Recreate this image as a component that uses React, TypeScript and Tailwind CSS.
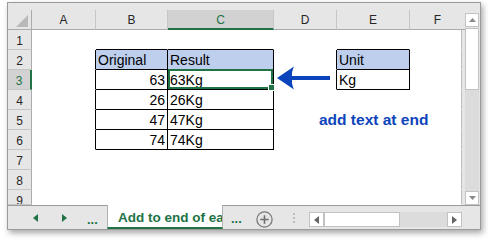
import React from 'react';

type Cell = { t?: string; right?: boolean; blue?: boolean; bb?: boolean; br?: boolean; sel?: boolean; arrow?: boolean; note?: boolean };

const COLS = [
  { k: 'A', w: 'w-[64px]' },
  { k: 'B', w: 'w-[72px]' },
  { k: 'C', w: 'w-[106px]' },
  { k: 'D', w: 'w-[63px]' },
  { k: 'E', w: 'w-[73px]' },
  { k: 'F', w: 'w-[52px]' },
];

const HEAD_W: Record<string, string> = {
  A: 'w-[64px]',
  B: 'w-[72px]',
  C: 'w-[106px]',
  D: 'w-[63px]',
  E: 'w-[73px]',
  F: 'w-[55px]',
};

const DATA: Record<string, Cell> = {
  B1: { bb: true },
  C1: { bb: true },
  E1: { bb: true },
  A2: { br: true },
  A3: { br: true },
  A4: { br: true },
  A5: { br: true },
  A6: { br: true },
  B2: { t: 'Original', blue: true, bb: true, br: true },
  C2: { t: 'Result', blue: true, bb: true, br: true },
  D2: { br: true },
  E2: { t: 'Unit', blue: true, bb: true, br: true },
  B3: { t: '63', right: true, bb: true, br: true },
  C3: { t: '63Kg', bb: true, br: true, sel: true },
  D3: { br: true, arrow: true },
  E3: { t: 'Kg', bb: true, br: true },
  B4: { t: '26', right: true, bb: true, br: true },
  C4: { t: '26Kg', bb: true, br: true },
  B5: { t: '47', right: true, bb: true, br: true },
  C5: { t: '47Kg', bb: true, br: true },
  D5: { note: true },
  B6: { t: '74', right: true, bb: true, br: true },
  C6: { t: '74Kg', bb: true, br: true },
};

function Arrow() {
  return (
    <svg className="absolute left-[2px] -top-[6px] z-10 overflow-visible" width="56" height="30" viewBox="0 0 56 30">
      <path
        d="M1 14 L18 2.5 Q15.5 8 16 12 L54 12 L54 16 L16 16 Q15.5 20 18 25.5 Z"
        fill="#0c44bc"
      />
    </svg>
  );
}

function DataCell({ col, row, w }: { col: string; row: number; w: string }) {
  const c = DATA[col + row] || {};
  const isF = col === 'F';
  return (
    <div
      className={`relative h-full shrink-0 border-r border-b ${w} ${
        isF ? 'border-r-[#bdbdbd]' : c.br ? 'border-r-black' : 'border-r-transparent'
      } ${c.bb ? 'border-b-black' : 'border-b-transparent'} ${c.blue ? 'bg-[#bdcfed]' : 'bg-white'}`}
    >
      {c.t && (
        <span
          className={`block px-[2px] pt-px text-[14px] leading-[19px] text-black whitespace-nowrap ${
            c.right ? 'text-right' : 'text-left'
          }`}
        >
          {c.t}
        </span>
      )}
      {c.note && (
        <span className="relative z-10 block pl-[45px] pt-[2px] text-[15.5px] leading-[16px] font-bold text-[#0c44bc] whitespace-nowrap">
          add text at end
        </span>
      )}
      {c.arrow && <Arrow />}
      {c.sel && (
        <div className="absolute -top-px left-0 right-0 bottom-0 z-20 border-2 border-[#217346]">
          <div className="absolute -right-[4px] -bottom-[4px] w-[7px] h-[7px] bg-[#217346] border border-white" />
        </div>
      )}
    </div>
  );
}

function Row({ n, h }: { n: number; h: string }) {
  const sel = n === 3;
  return (
    <div className={`flex ${h}`}>
      <div
        className={`w-[24px] h-full shrink-0 border-b border-b-[#c6c6c6] text-center text-[12px] leading-[18px] pt-[2px] overflow-hidden ${
          sel
            ? 'bg-[#d2d2d2] border-r-2 border-r-[#217346] text-[#217346]'
            : 'bg-[#e6e6e6] border-r border-r-[#ababab] text-[#262626]'
        }`}
      >
        {n}
      </div>
      {COLS.map((c) => (
        <DataCell key={c.k} col={c.k} row={n} w={c.w} />
      ))}
    </div>
  );
}

function TriLeft({ color, cls }: { color: string; cls?: string }) {
  return (
    <svg className={cls} width="5" height="8" viewBox="0 0 5 8">
      <path d="M0 4 L5 0 L5 8 Z" fill={color} />
    </svg>
  );
}
function TriRight({ color, cls }: { color: string; cls?: string }) {
  return (
    <svg className={cls} width="5" height="8" viewBox="0 0 5 8">
      <path d="M5 4 L0 0 L0 8 Z" fill={color} />
    </svg>
  );
}

export default function App() {
  const rows = [1, 2, 3, 4, 5, 6, 7, 8];
  return (
    <div className="w-[488px] h-[242px] bg-white pl-[7px] pt-[2px] font-['Liberation_Sans',Arial,sans-serif]">
      <div className="w-[474px] h-[228px] border border-[#9b9b9b] bg-[#e6e6e6] shadow-[2px_3px_6px_rgba(0,0,0,0.35)] flex flex-col overflow-hidden">
        <div className="flex h-[202px] shrink-0">
          {/* sheet */}
          <div className="w-[457px] flex flex-col shrink-0">
            <div className="h-[7px] shrink-0" />
            {/* column headers */}
            <div className="flex h-[20px] shrink-0">
              <div className="relative w-[24px] h-full shrink-0 border-r border-b border-[#ababab]">
                <svg className="absolute left-0 top-0" width="23" height="19" viewBox="0 0 23 19">
                  <path d="M8 17 L20 17 L20 5 Z" fill="#b9b9b9" />
                </svg>
              </div>
              {COLS.map((c) => {
                const sel = c.k === 'C';
                return (
                  <div
                    key={c.k}
                    className={`${HEAD_W[c.k]} h-full shrink-0 text-center text-[12px] leading-[19px] pt-px ${
                      c.k === 'F' ? '' : 'border-r border-r-[#c6c6c6]'
                    } ${
                      sel
                        ? 'bg-[#d2d2d2] border-b-2 border-b-[#217346] text-[#217346]'
                        : 'bg-[#e6e6e6] border-b border-b-[#ababab] text-[#262626]'
                    }`}
                  >
                    {c.k}
                  </div>
                );
              })}
            </div>
            {rows.map((n) => (
              <Row key={n} n={n} h="h-[20px]" />
            ))}
            <Row n={9} h="h-[15px]" />
          </div>
          {/* vertical scrollbar */}
          <div className="w-[15px] flex flex-col pt-[10px] shrink-0">
            <div className="w-[14px] h-[14px] bg-white border border-[#c2c2c2] flex items-center justify-center shrink-0">
              <svg width="7" height="4" viewBox="0 0 7 4">
                <path d="M3.5 0 L7 4 L0 4 Z" fill="#8a8a8a" />
              </svg>
            </div>
            <div className="w-[14px] h-[62px] mt-px bg-white border border-[#c2c2c2] shrink-0" />
            <div className="w-[14px] flex-1 bg-[#dcdcdc]" />
            <div className="w-[14px] h-[14px] bg-white border border-[#c2c2c2] flex items-center justify-center shrink-0">
              <svg width="7" height="4" viewBox="0 0 7 4">
                <path d="M3.5 4 L7 0 L0 0 Z" fill="#8a8a8a" />
              </svg>
            </div>
          </div>
        </div>
        {/* tab bar */}
        <div className="flex h-[24px] shrink-0 border-t border-[#9b9b9b]">
          <div className="w-[99px] h-full flex items-center pl-[25px] shrink-0">
            <TriLeft color="#217346" />
            <TriRight color="#217346" cls="ml-[24px]" />
            <span className="ml-[20px] text-[13px] font-bold leading-[15px] text-[#217346] pt-[3px]">...</span>
          </div>
          <div className="w-[116px] h-[24px] -mt-px shrink-0 bg-white border-l border-r border-l-[#b0b0b0] border-r-[#b0b0b0] border-b-2 border-b-[#217346] overflow-hidden">
            <span className="block pl-[10px] pt-[3px] text-[13.5px] leading-[19px] font-bold text-[#217346] whitespace-nowrap">
              Add to end of each
            </span>
          </div>
          <span className="ml-[8px] w-[14px] text-[13px] font-bold leading-[15px] text-[#217346] pt-[5px] shrink-0">...</span>
          <svg className="ml-[11px] mt-[5px] shrink-0" width="17" height="17" viewBox="0 0 17 17">
            <circle cx="8.5" cy="8.5" r="7.6" fill="none" stroke="#7a7a7a" strokeWidth="1.3" />
            <path d="M8.5 4.3 V12.7 M4.3 8.5 H12.7" stroke="#6e6e6e" strokeWidth="1.6" />
          </svg>
          <div className="ml-[20px] mt-[7px] flex flex-col gap-[2px] shrink-0">
            <div className="w-[2px] h-[2px] bg-[#bdbdbd]" />
            <div className="w-[2px] h-[2px] bg-[#bdbdbd]" />
            <div className="w-[2px] h-[2px] bg-[#bdbdbd]" />
          </div>
          <div className="ml-[14px] mt-[6px] flex h-[15px] shrink-0">
            <div className="w-[15px] h-full bg-white border border-[#c2c2c2] flex items-center justify-center">
              <TriLeft color="#666666" />
            </div>
            <div className="w-[76px] h-full bg-white border border-[#c2c2c2]" />
            <div className="w-[47px] h-full bg-[#dcdcdc]" />
            <div className="w-[15px] h-full bg-white border border-[#c2c2c2] flex items-center justify-center">
              <TriRight color="#666666" />
            </div>
          </div>
        </div>
      </div>
    </div>
  );
}
